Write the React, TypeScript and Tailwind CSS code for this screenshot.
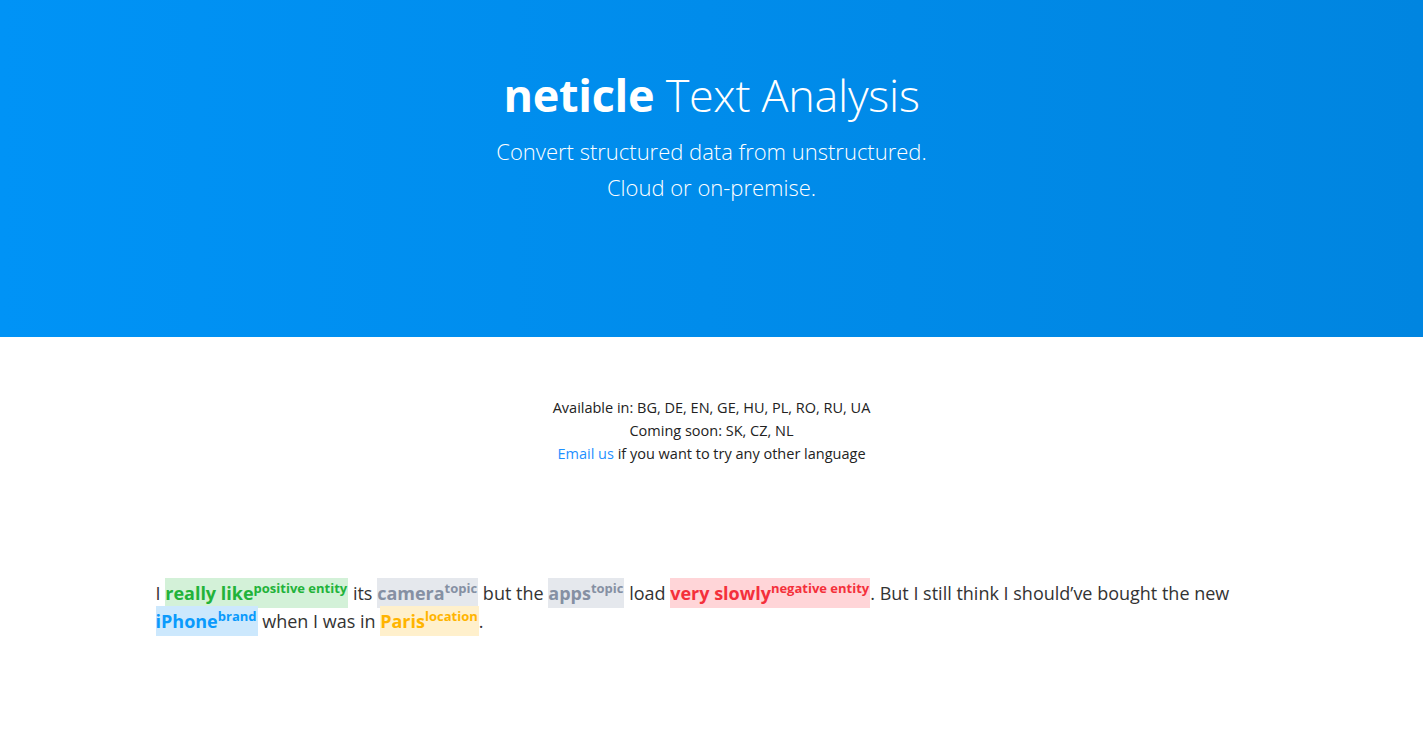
import React from 'react';

const font = { fontFamily: '"Segoe UI", "Open Sans", "Noto Sans", sans-serif' };

type Tag = { text: string; label: string; kind: 'pos' | 'topic' | 'neg' | 'brand' | 'loc' };

const kindClass: Record<Tag['kind'], string> = {
  pos: 'bg-[#d3f1d8] text-[#22b33a]',
  topic: 'bg-[#e5e8ed] text-[#8590a3]',
  neg: 'bg-[#ffd5d8] text-[#f4303b]',
  brand: 'bg-[#cce8fd] text-[#0a9afc]',
  loc: 'bg-[#fff0cc] text-[#ffb400]',
};

const Mark = ({ text, label, kind }: Tag) => (
  <span className={`font-bold py-[3px] pr-[1px] ${kindClass[kind]}`}>
    {text}
    <sup className="text-[13px] font-bold top-[-0.55em]">{label}</sup>
  </span>
);

export default function App() {
  return (
    <div className="w-full min-h-screen bg-white text-[#333]" style={font}>
      {/* hero */}
      <header className="h-[337px] w-full bg-gradient-to-r from-[#0093f6] to-[#0085e0] text-white flex flex-col items-center pt-[63px]">
        <h1 className="text-[45px] leading-[64px] tracking-[-0.3px]">
          <span className="font-bold">neticle</span> <span className="font-light">Text Analysis</span>
        </h1>
        <p className="text-[22px] font-light leading-[36px] text-center mt-[6px]">
          Convert structured data from unstructured.
          <br />
          Cloud or on-premise.
        </p>
      </header>

      {/* languages */}
      <section className="pt-[59px] text-center text-[14.5px] leading-[23px] text-[#222]">
        <div>Available in: BG, DE, EN, GE, HU, PL, RO, RU, UA</div>
        <div>Coming soon: SK, CZ, NL</div>
        <div>
          <a href="#" className="text-[#1e90ff]">Email us</a> if you want to try any other language
        </div>
      </section>

      {/* demo sentence */}
      <section className="max-w-[1140px] mx-auto px-[14px] pt-[114px]">
        <p className="text-[18px] leading-[28px] text-[#333]">
          I <Mark text="really like" label="positive entity" kind="pos" /> its{' '}
          <Mark text="camera" label="topic" kind="topic" /> but the{' '}
          <Mark text="apps" label="topic" kind="topic" /> load{' '}
          <Mark text="very slowly" label="negative entity" kind="neg" />. But I still think I should’ve bought the new{' '}
          <Mark text="iPhone" label="brand" kind="brand" /> when I was in{' '}
          <Mark text="Paris" label="location" kind="loc" />.
        </p>
      </section>
    </div>
  );
}
